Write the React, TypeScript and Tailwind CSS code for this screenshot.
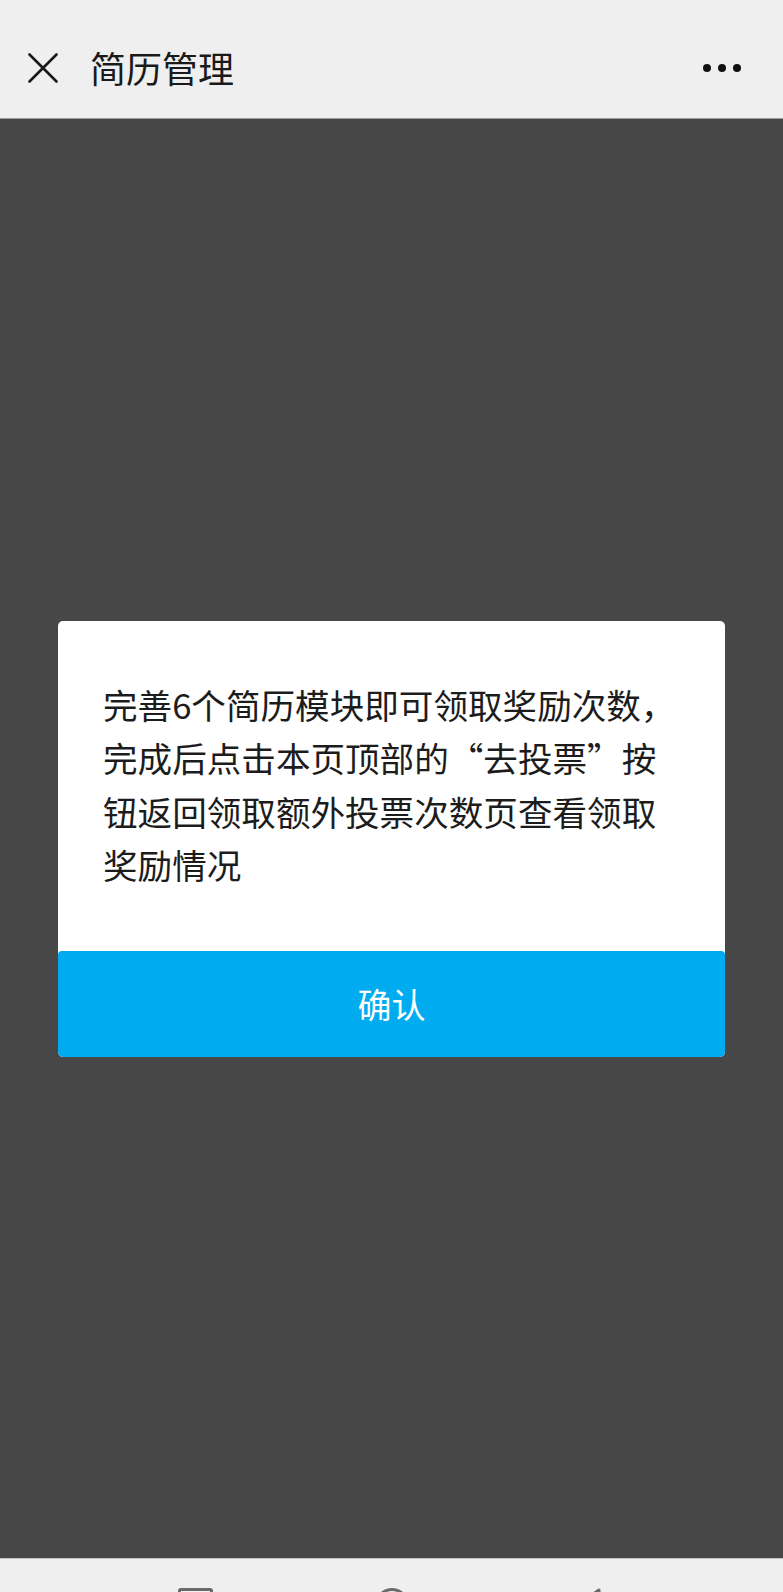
// App.tsx — 简历管理 page with the reward notice dialog open

const CJK = "font-['Noto_Sans_CJK_SC','Noto_Sans',sans-serif]";

const NOTICE =
    "完善6个简历模块即可领取奖励次数，完成后点击本页顶部的“去投票”按钮返回领取额外投票次数页查看领取奖励情况";

const CloseIcon = () => (
    <svg width="30" height="30" viewBox="0 0 30 30" fill="none" aria-hidden>
        <path d="M1.5 1.5L28.5 28.5M28.5 1.5L1.5 28.5" stroke="#1a1a1a" strokeWidth="2.6" strokeLinecap="round" />
    </svg>
);

const App = () => {
    return (
        <div className={`h-[1592px] w-full flex flex-col bg-[#474747] ${CJK}`}>
            {/* Top bar */}
            <header className="h-[119px] shrink-0 flex items-center pt-[17px] pl-[28px] pr-[42px] bg-[#efefef] border-b border-[#9c9c9c]">
                <CloseIcon />
                <h1 className="ml-[32px] text-[36px] leading-none text-[#1a1a1a] font-normal -mt-[1px]">简历管理</h1>
                <div className="ml-auto flex items-center gap-[7px]">
                    <span className="w-[8px] h-[8px] rounded-full bg-[#111]" />
                    <span className="w-[8px] h-[8px] rounded-full bg-[#111]" />
                    <span className="w-[8px] h-[8px] rounded-full bg-[#111]" />
                </div>
            </header>

            {/* Dim overlay with dialog */}
            <main className="flex-1 flex items-center justify-center px-[58px]">
                <div className="w-full rounded-[5px] overflow-hidden bg-white">
                    <p className="pl-[45px] pr-[41px] pt-[57px] pb-[59px] text-[34.6px] leading-[53.5px] text-[#1c1c1c]">
                        {NOTICE}
                    </p>
                    <button className="w-full h-[106px] flex items-center justify-center bg-[#00abf0] text-white text-[34px] rounded-[4px]">
                        确认
                    </button>
                </div>
            </main>

            {/* System nav bar, mostly cut off */}
            <footer className="h-[34px] shrink-0 bg-[#efefef] border-t border-[#c4c4c4] overflow-hidden">
                <div className="w-[588px] mx-auto grid grid-cols-3 pt-[29px]">
                    <div className="flex justify-center">
                        <div className="w-[35px] h-[35px] border-[3px] border-[#6a6a6a] rounded-[3px]" />
                    </div>
                    <div className="flex justify-center">
                        <div className="w-[34px] h-[34px] border-[3px] border-[#6a6a6a] rounded-full" />
                    </div>
                    <div className="flex justify-center">
                        <svg width="34" height="36" viewBox="0 0 34 36" fill="none" aria-hidden>
                            <path d="M28 2L5 18L28 34Z" stroke="#6a6a6a" strokeWidth="3" strokeLinejoin="round" />
                        </svg>
                    </div>
                </div>
            </footer>
        </div>
    );
};

export default App;
